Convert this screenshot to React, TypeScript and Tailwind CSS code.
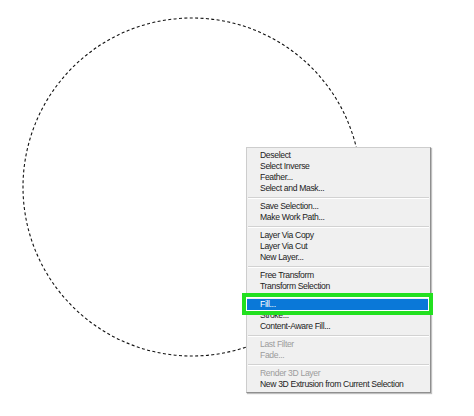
import React from 'react'

type Item = { label: string; disabled?: boolean; active?: boolean }

const sections: Item[][] = [
    [{ label: 'Deselect' }, { label: 'Select Inverse' }, { label: 'Feather...' }, { label: 'Select and Mask...' }],
    [{ label: 'Save Selection...' }, { label: 'Make Work Path...' }],
    [{ label: 'Layer Via Copy' }, { label: 'Layer Via Cut' }, { label: 'New Layer...' }],
    [{ label: 'Free Transform' }, { label: 'Transform Selection' }],
    [{ label: 'Fill...', active: true }, { label: 'Stroke...' }, { label: 'Content-Aware Fill...' }],
    [{ label: 'Last Filter', disabled: true }, { label: 'Fade...', disabled: true }],
    [{ label: 'Render 3D Layer', disabled: true }, { label: 'New 3D Extrusion from Current Selection' }],
]

function MenuRow({ item }: { item: Item }) {
    const color = item.active ? 'bg-[#0a78d8] text-white' : item.disabled ? 'text-[#9c9c9c]' : 'text-[#222]'
    return (
        <div className={`h-[11px] leading-[11px] pl-[13px] whitespace-nowrap ${color}`}>
            {item.label}
        </div>
    )
}

export default function App() {
    return (
        <div className="relative w-[474px] h-[416px] bg-white overflow-hidden" style={{ fontFamily: '"Liberation Sans", Arial, sans-serif' }}>
            {/* marquee selection */}
            <svg className="absolute inset-0" width="474" height="416" viewBox="0 0 474 416">
                <circle cx="192" cy="187" r="169" fill="none" stroke="#111" strokeWidth="1.1" strokeDasharray="3 2.4" />
            </svg>

            {/* context menu */}
            <div className="absolute left-[246px] top-[147px] w-[185px] bg-[#f0f0f0] border border-[#cdcdcd] border-r-[#8f8f8f] border-b-[#8f8f8f] shadow-[1px_1px_1px_rgba(0,0,0,0.25)] py-[2px] text-[8.6px] tracking-[-0.35px]">
                {sections.map((section, si) => (
                    <div key={si}>
                        {si > 0 && (
                            <div className="h-[7px] flex flex-col justify-center px-px">
                                <div className="h-px bg-[#d2d2d2]" />
                                <div className="h-px bg-white" />
                            </div>
                        )}
                        {section.map((item) => (
                            <MenuRow key={item.label} item={item} />
                        ))}
                    </div>
                ))}
            </div>

            {/* highlight box */}
            <div className="absolute left-[242px] top-[293px] w-[191px] h-[22px] border-4 border-[#22e01f] shadow-[inset_0_0_0_1px_#fff]" />
        </div>
    )
}
